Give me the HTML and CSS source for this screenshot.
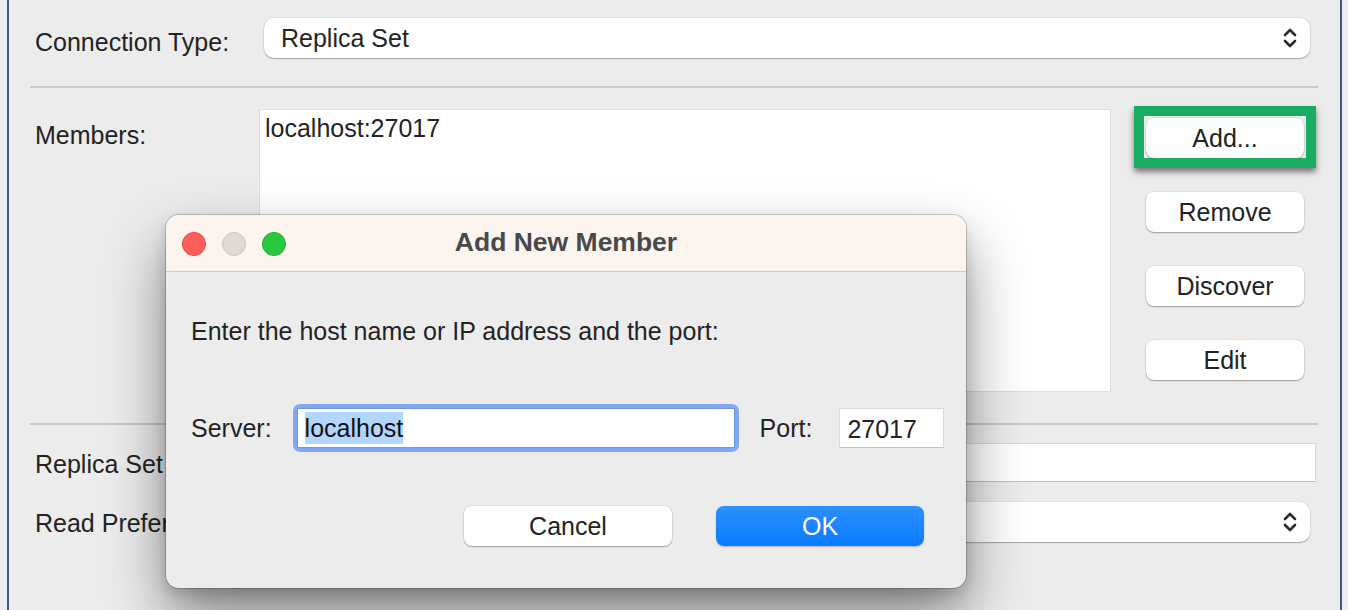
FILE: index.html
```html
<!DOCTYPE html>
<html>
<head>
<meta charset="utf-8">
<link rel="stylesheet" href="styles.css">
</head>
<body>
<div class="window">
  <div class="row row-conn">
    <div class="lbl">Connection Type:</div>
    <div class="select">
      <span>Replica Set</span>
      <svg class="chev" width="16" height="24" viewBox="0 0 16 24"><path d="M3 9 L8 4 L13 9 M3 15 L8 20 L13 15" fill="none" stroke="#2a2a2a" stroke-width="2.6" stroke-linecap="round" stroke-linejoin="round"/></svg>
    </div>
  </div>
  <div class="sep"></div>
  <div class="row row-members">
    <div class="lbl lbl-members">Members:</div>
    <div class="list">localhost:27017</div>
    <div class="btn-col">
      <div class="btn btn-add">Add...</div>
      <div class="btn">Remove</div>
      <div class="btn">Discover</div>
      <div class="btn">Edit</div>
    </div>
  </div>
  <div class="sep sep2"></div>
  <div class="row row-name">
    <div class="lbl">Replica Set Name:</div>
    <div class="input"></div>
  </div>
  <div class="row row-pref">
    <div class="lbl">Read Preference:</div>
    <div class="select select-pref">
      <span></span>
      <svg class="chev" width="16" height="24" viewBox="0 0 16 24"><path d="M3 9 L8 4 L13 9 M3 15 L8 20 L13 15" fill="none" stroke="#2a2a2a" stroke-width="2.6" stroke-linecap="round" stroke-linejoin="round"/></svg>
    </div>
  </div>

  <div class="dialog">
    <div class="titlebar">
      <div class="lights">
        <span class="light red"></span>
        <span class="light gray"></span>
        <span class="light green"></span>
      </div>
      <div class="title">Add New Member</div>
    </div>
    <div class="dbody">
      <div class="prompt">Enter the host name or IP address and the port:</div>
      <div class="server-row">
        <div class="dlbl">Server:</div>
        <div class="focus-ring"><div class="server-input"><span class="sel">localhost</span></div></div>
        <div class="dlbl port-lbl">Port:</div>
        <div class="port-input">27017</div>
      </div>
      <div class="actions">
        <div class="btn dbtn">Cancel</div>
        <div class="btn dbtn ok">OK</div>
      </div>
    </div>
  </div>
</div>
</body>
</html>
```

FILE: styles.css
```css
* { box-sizing: border-box; }
html, body { margin: 0; padding: 0; }
body {
  background: #ececec;
  font-family: "Liberation Sans", Arial, sans-serif;
  font-size: 25px;
  color: #232323;
  width: 1348px;
  height: 610px;
  overflow: hidden;
}
.window {
  position: relative;
  margin-left: 7px;
  width: 1335px;
  height: 610px;
  border-left: 2px solid #3d5b80;
  border-right: 2px solid #3d5b80;
  padding: 18px 22px 0 21px;
}
.row {
  display: flex;
  align-items: flex-start;
}
.lbl {
  width: 229px;
  flex: none;
  padding-left: 5px;
  line-height: 30px;
  white-space: nowrap;
  overflow: hidden;
}
.row-conn .lbl { margin-top: 9px; }
.select {
  flex: 1;
  height: 40px;
  margin-left: 5px;
  margin-right: 8px;
  background: #fff;
  border-radius: 10px;
  box-shadow: 0 1px 1.5px rgba(0,0,0,0.28), 0 0 0 0.5px rgba(0,0,0,0.08);
  display: flex;
  align-items: center;
  justify-content: space-between;
  padding: 0 12px 0 17px;
}
.chev { display: block; }
.sep {
  height: 2px;
  background: #c9c9c9;
  margin-top: 28px;
}
.row-members { margin-top: 21px; }
.lbl-members { margin-top: 11px; }
.list {
  width: 852px;
  height: 283px;
  background: #fff;
  border: 1px solid #dedede;
  padding: 3px 5px;
  line-height: 30px;
  flex: none;
}
.btn-col {
  margin-left: 35px;
  width: 158px;
  padding-top: 9px;
  display: flex;
  flex-direction: column;
  gap: 34px;
}
.btn {
  position: relative;
  height: 40px;
  background: #fff;
  border-radius: 8px;
  box-shadow: 0 1px 1.5px rgba(0,0,0,0.3), 0 0 0 0.5px rgba(0,0,0,0.1);
  display: flex;
  align-items: center;
  justify-content: center;
  color: #222;
}
.btn-add::after {
  content: "";
  position: absolute;
  left: -12px;
  right: -12px;
  top: -12px;
  bottom: -10px;
  border: 10px solid #19ad63;
  box-shadow: 0 4px 6px rgba(0,0,0,0.5);
}
.sep2 { margin-top: 31px; }
.row-name { margin-top: 18px; }
.row-name .lbl { margin-top: 6px; }
.input {
  flex: 1;
  height: 39px;
  margin-right: 2px;
  background: #fff;
  border: 1px solid #d8d8d8;
  border-bottom-color: #bdbdbd;
}
.row-pref { margin-top: 20px; }
.row-pref .lbl { margin-top: 6px; }

/* dialog */
.dialog {
  position: absolute;
  left: 157px;
  top: 215px;
  width: 800px;
  height: 373px;
  border-radius: 13px;
  background: #ececec;
  overflow: hidden;
  box-shadow: 0 0 0 1px rgba(0,0,0,0.18), 0 30px 60px rgba(0,0,0,0.45), 0 6px 14px rgba(0,0,0,0.15);
}
.titlebar {
  position: relative;
  height: 57px;
  background: #fbf4ef;
  border-bottom: 1px solid #cfcbc8;
  display: flex;
  align-items: center;
  justify-content: center;
}
.lights {
  position: absolute;
  left: 16px;
  top: 17px;
  display: flex;
  gap: 16px;
}
.light {
  width: 24px;
  height: 24px;
  border-radius: 50%;
  display: block;
}
.red { background: #fe5f57; border: 1px solid #e2463f; }
.gray { background: #ded9d5; border: 1px solid #c9c4c0; }
.green { background: #28c840; border: 1px solid #1eab31; }
.title {
  font-weight: bold;
  font-size: 26.5px;
  color: #494949;
  margin-top: -1px;
}
.dbody {
  padding: 44px 0 0 25px;
}
.prompt {
  line-height: 30px;
}
.server-row {
  display: flex;
  align-items: center;
  margin-top: 58px;
  height: 48px;
}
.dlbl { line-height: 30px; flex: none; }
.focus-ring {
  flex: none;
  margin-left: 21px;
  width: 446px;
  height: 48px;
  border-radius: 7px;
  background: #80a8f2;
  padding: 4px;
}
.server-input {
  height: 40px;
  background: #fff;
  border: 1px solid #6f98e6;
  padding: 4px 7px;
  display: flex;
  align-items: center;
}
.sel {
  background: #b3d6ff;
  line-height: 32px;
  color: #111;
}
.port-lbl { margin-left: 21px; }
.port-input {
  flex: none;
  margin-left: 27px;
  width: 105px;
  height: 40px;
  background: #fff;
  border: 1px solid #dadada;
  border-bottom-color: #c2c2c2;
  padding: 0 7px;
  line-height: 40px;
}
.actions {
  display: flex;
  justify-content: flex-end;
  gap: 44px;
  margin-top: 54px;
  padding-right: 42px;
}
.dbtn { width: 208px; }
.ok {
  background: linear-gradient(#2c90ff, #0a7bff);
  color: #fff;
  box-shadow: 0 1px 1.5px rgba(0,0,0,0.25);
}
```
